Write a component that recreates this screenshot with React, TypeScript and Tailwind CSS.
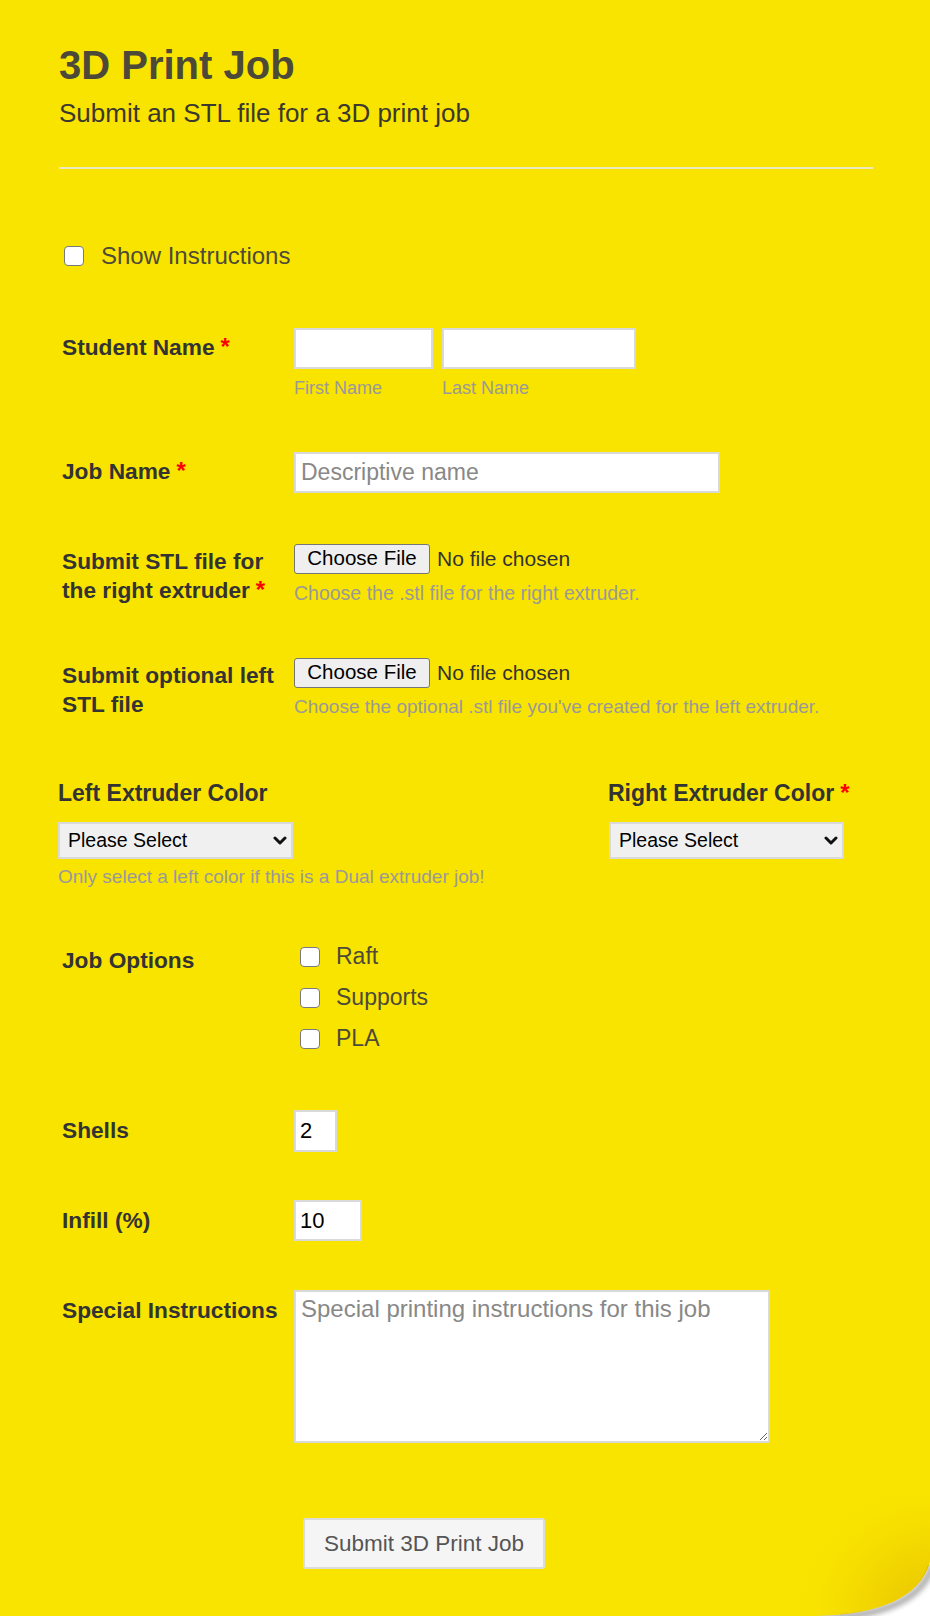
import type { ReactNode } from 'react';

function Box() {
  return <span className="block w-5 h-5 shrink-0 rounded-[4px] border-[1.5px] border-[#7a7a7a] bg-white" />;
}

function Req() {
  return <span className="ml-[6px] text-[24px] leading-none text-[#ff0000]">*</span>;
}

function Row(props: { label: ReactNode; h: string; pt: string; children: ReactNode }) {
  return (
    <div className={`flex ${props.h}`}>
      <div className={`w-[235px] shrink-0 pl-[3px] ${props.pt} text-[22.7px] leading-[29px] font-bold text-[#333333]`}>
        {props.label}
      </div>
      <div>{props.children}</div>
    </div>
  );
}

function FilePick(props: { hint: string; small?: boolean }) {
  return (
    <div>
      <div className="flex items-center gap-[7px]">
        <span className="flex h-[30px] w-[136px] items-center justify-center rounded-[3px] border border-[#767676] bg-[#efefef] text-[20.5px] text-black">
          Choose File
        </span>
        <span className="text-[21px] text-[#333333]">No file chosen</span>
      </div>
      <div className={`mt-[7px] leading-[22px] text-[#999999] ${props.small ? 'text-[19px]' : 'text-[19.5px]'}`}>
        {props.hint}
      </div>
    </div>
  );
}

function Picker() {
  return (
    <div className="relative w-[235px] h-[37px]">
      <select className="w-full h-full appearance-none border-2 border-[#d9d9d9] bg-[#f0f0f0] pl-[8px] text-[19.5px] text-black outline-none">
        <option>Please Select</option>
      </select>
      <svg className="pointer-events-none absolute right-[6px] top-[14px] w-[14px] h-[9px]" viewBox="0 0 14 9" fill="none">
        <path d="M2 2 L7 7 L12 2" stroke="#111" strokeWidth={3} strokeLinecap="round" strokeLinejoin="round" />
      </svg>
    </div>
  );
}

function PageCurl() {
  return (
    <svg className="pointer-events-none absolute bottom-0 right-0 w-[200px] h-[120px]" viewBox="0 0 200 120">
      <defs>
        <radialGradient id="curlShade" cx="205" cy="125" r="150" gradientUnits="userSpaceOnUse">
          <stop offset="0" stopColor="#d4a200" stopOpacity="0.6" />
          <stop offset="0.5" stopColor="#e8c000" stopOpacity="0.35" />
          <stop offset="1" stopColor="#f9e400" stopOpacity="0" />
        </radialGradient>
        <clipPath id="curlWhite">
          <path d="M85 120 Q185 118 200 66 V120 Z" />
        </clipPath>
        <clipPath id="curlYellow">
          <path d="M0 0 H200 V66 Q185 118 85 120 H0 Z" />
        </clipPath>
        <filter id="curlBlur">
          <feGaussianBlur stdDeviation="2.5" />
        </filter>
      </defs>
      <path d="M0 0 H200 V66 Q185 118 85 120 H0 Z" fill="url(#curlShade)" />
      <path d="M85 120 Q185 118 200 66 V120 Z" fill="#ffffff" />
      <g clipPath="url(#curlWhite)">
        <path d="M85 122 Q188 121 203 68" stroke="#000000" strokeOpacity="0.3" strokeWidth="7" fill="none" filter="url(#curlBlur)" />
      </g>
      <g clipPath="url(#curlYellow)">
        <path d="M110 121 Q186 116 201 70" stroke="#d6a800" strokeOpacity="0.75" strokeWidth="6" fill="none" />
      </g>
    </svg>
  );
}

export default function App() {
  return (
    <div className="h-[1616px] overflow-hidden bg-white font-['Liberation_Sans',Arial,sans-serif]">
      <div className="relative h-[1616px] overflow-hidden bg-[#f9e400]">
        <div className="pl-[59px] pr-[57px] pt-[45px]">
          <h1 className="text-[40px] leading-[40px] font-bold text-[#4d4938]">3D Print Job</h1>
          <p className="mt-[12px] text-[26px] leading-[32px] text-[#3b392f]">Submit an STL file for a 3D print job</p>
          <div className="mt-[38px] h-[2px] bg-[#ece8c0]" />

          <div className="mt-[72px] flex h-[30px] items-center gap-[17px] pl-[5px]">
            <Box />
            <span className="text-[24px] text-[#4d4a3a]">Show Instructions</span>
          </div>

          <div className="mt-[57px]">
            <Row h="h-[124px]" pt="pt-[5px]" label={<>Student Name<Req /></>}>
              <div className="flex gap-[9px]">
                <div>
                  <input className="h-[41px] w-[139px] border-2 border-[#d9d9d9] bg-white outline-none" />
                  <div className="mt-[8px] text-[18px] leading-[22px] text-[#999999]">First Name</div>
                </div>
                <div>
                  <input className="h-[41px] w-[194px] border-2 border-[#d9d9d9] bg-white outline-none" />
                  <div className="mt-[8px] text-[18px] leading-[22px] text-[#999999]">Last Name</div>
                </div>
              </div>
            </Row>

            <Row h="h-[91px]" pt="pt-[5px]" label={<>Job Name<Req /></>}>
              <input
                placeholder="Descriptive name"
                className="h-[41px] w-[426px] border-2 border-[#d9d9d9] bg-white px-[5px] text-[23px] outline-none placeholder:text-[#888888]"
              />
            </Row>

            <Row
              h="h-[114px]"
              pt="pt-[4px]"
              label={
                <>
                  <span className="block">Submit STL file for</span>
                  <span className="block">
                    the right extruder<Req />
                  </span>
                </>
              }
            >
              <FilePick hint="Choose the .stl file for the right extruder." />
            </Row>

            <Row h="h-[121px]" pt="pt-[4px]" label="Submit optional left STL file">
              <FilePick small hint="Choose the optional .stl file you've created for the left extruder." />
            </Row>

            <div className="flex h-[158px] -ml-[1px]">
              <div className="w-[550px] shrink-0">
                <div className="text-[23px] leading-[30px] font-bold text-[#333333]">Left Extruder Color</div>
                <div className="mt-[14px]">
                  <Picker />
                </div>
                <div className="mt-[7px] text-[19px] leading-[22px] text-[#999999]">
                  Only select a left color if this is a Dual extruder job!
                </div>
              </div>
              <div>
                <div className="text-[23px] leading-[30px] font-bold text-[#333333]">
                  Right Extruder Color<Req />
                </div>
                <div className="mt-[14px] ml-[1px]">
                  <Picker />
                </div>
              </div>
            </div>

            <Row h="h-[174px]" pt="pt-[10px]" label="Job Options">
              <div className="pl-[6px]">
                {['Raft', 'Supports', 'PLA'].map((o) => (
                  <div key={o} className="flex h-[41px] items-center gap-[16px]">
                    <Box />
                    <span className="text-[23px] text-[#4d4a3a]">{o}</span>
                  </div>
                ))}
              </div>
            </Row>

            <Row h="h-[90px]" pt="pt-[6px]" label="Shells">
              <input
                defaultValue="2"
                className="h-[42px] w-[43px] border-2 border-[#d9d9d9] bg-white px-[4px] text-[22px] text-black outline-none"
              />
            </Row>

            <Row h="h-[90px]" pt="pt-[6px]" label="Infill (%)">
              <input
                defaultValue="10"
                className="h-[41px] w-[68px] border-2 border-[#d9d9d9] bg-white px-[4px] text-[22px] text-black outline-none"
              />
            </Row>

            <Row h="h-[228px]" pt="pt-[6px]" label="Special Instructions">
              <textarea
                placeholder="Special printing instructions for this job"
                className="block h-[153px] w-[476px] border-2 border-[#d9d9d9] bg-white px-[5px] pt-[2px] text-[24px] leading-[30px] outline-none placeholder:text-[#888888]"
              />
            </Row>

            <button className="ml-[244px] h-[51px] w-[242px] rounded-[3px] border-2 border-[#dcdcdc] bg-[#f5f5f5] text-[22.5px] text-[#555555]">
              Submit 3D Print Job
            </button>
          </div>
        </div>

        <PageCurl />
      </div>
    </div>
  );
}
